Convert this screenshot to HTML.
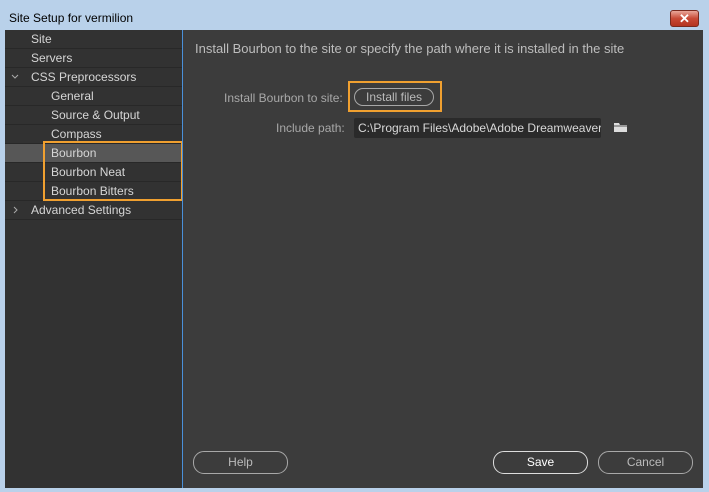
<!DOCTYPE html>
<html><head><style>
*{margin:0;padding:0;box-sizing:border-box}
body{width:709px;height:492px;background:#b9d1ea;font-family:"Liberation Sans",sans-serif;position:relative;overflow:hidden;font-size:12px}
.abs{position:absolute}
.title{left:9px;top:11px;font-size:12px;color:#000}
.close{left:670px;top:10px;width:29px;height:17px;background:linear-gradient(#e9a79a,#c84a36 50%,#b43420);border:1px solid #7a2a1e;border-radius:3px;color:#fff;text-align:center;font-weight:bold;font-size:13px;line-height:15px}
.side{left:5px;top:30px;width:177px;height:458px;background:#323232}
.main{left:183px;top:30px;width:520px;height:458px;background:#3c3c3c}
.vline{left:182px;top:30px;width:1px;height:458px;background:#4a90d9}
.row{position:absolute;left:0;width:177px;height:19px;border-bottom:1px solid #282828;color:#d6d6d6;line-height:18px;font-size:12px}
.sel{background:#575757}
.chev{position:absolute;left:5px;top:0}
.ob{border:2px solid #f0a030}
.btn{border:1px solid #a8a8a8;border-radius:11px;color:#bbb;text-align:center;line-height:21px;font-size:12px}
</style></head><body>
<div class="abs title">Site Setup for vermilion</div>
<div class="abs close">✕</div>
<div class="abs side">
<div class="row" style="top:0"><span style="margin-left:26px">Site</span></div>
<div class="row" style="top:19px"><span style="margin-left:26px">Servers</span></div>
<div class="row" style="top:38px"><svg class="chev" width="10" height="18"><path d="M2 7l3 3 3-3" stroke="#aaa" fill="none"/></svg><span style="margin-left:26px">CSS Preprocessors</span></div>
<div class="row" style="top:57px"><span style="margin-left:46px">General</span></div>
<div class="row" style="top:76px"><span style="margin-left:46px">Source &amp; Output</span></div>
<div class="row" style="top:95px"><span style="margin-left:46px">Compass</span></div>
<div class="row sel" style="top:114px"><span style="margin-left:46px">Bourbon</span></div>
<div class="row" style="top:133px"><span style="margin-left:46px">Bourbon Neat</span></div>
<div class="row" style="top:152px"><span style="margin-left:46px">Bourbon Bitters</span></div>
<div class="row" style="top:171px"><svg class="chev" width="10" height="18"><path d="M4 6l3 3-3 3" stroke="#aaa" fill="none"/></svg><span style="margin-left:26px">Advanced Settings</span></div>
</div>
<div class="abs ob" style="left:43px;top:141px;width:140px;height:60px"></div>
<div class="abs main">
<div class="abs" style="left:12px;top:11px;color:#bdbdbd;font-size:13px;white-space:nowrap">Install Bourbon to the site or specify the path where it is installed in the site</div>
<div class="abs" style="left:41px;top:61px;color:#a8a8a8">Install Bourbon to site:</div>
<div class="abs" style="left:93px;top:91px;color:#a8a8a8">Include path:</div>
<div class="abs ob" style="left:165px;top:51px;width:94px;height:31px"></div>
<div class="abs btn" style="left:171px;top:58px;width:80px;height:18px;line-height:16px">Install files</div>
<div class="abs" style="left:171px;top:88px;width:247px;height:20px;background:#2a2a2a;border-radius:2px;color:#d8d8d8;line-height:20px;padding-left:4px;white-space:nowrap;overflow:hidden">C:\Program Files\Adobe\Adobe Dreamweaver CC (</div>
<svg class="abs" style="left:430px;top:91px" width="15" height="12"><path d="M1 2h5l1 2h7v7H1z" fill="#ddd"/><path d="M1 5h13" stroke="#555" stroke-width="1"/></svg>
<div class="abs btn" style="left:10px;top:421px;width:95px;height:23px">Help</div>
<div class="abs btn" style="left:310px;top:421px;width:95px;height:23px;border-color:#ddd;color:#fff">Save</div>
<div class="abs btn" style="left:415px;top:421px;width:95px;height:23px">Cancel</div>
</div>
<div class="abs vline"></div>
</body></html>
